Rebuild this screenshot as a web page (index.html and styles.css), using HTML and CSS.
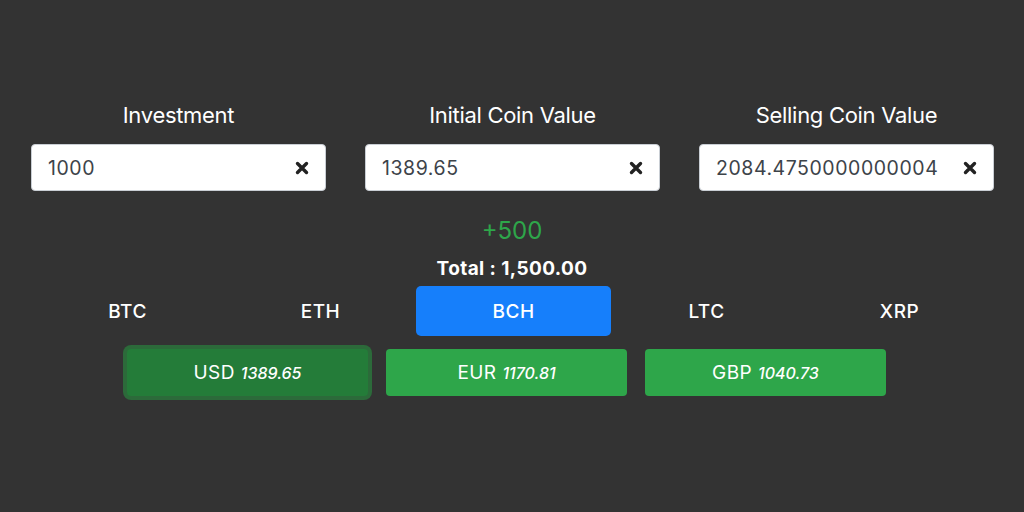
FILE: index.html
```html
<!DOCTYPE html>
<html>
<head>
<meta charset="utf-8">
<link rel="stylesheet" href="styles.css">
</head>
<body>
<main class="app">
  <section class="fields">
    <div class="field">
      <label class="field-label">Investment</label>
      <div class="input-box">
        <span class="input-value">1000</span>
        <svg class="clear" viewBox="0 0 14 14" width="14" height="14"><path d="M2.5 2.5 L11.5 11.5 M11.5 2.5 L2.5 11.5" stroke="#222" stroke-width="3.4" stroke-linecap="round"/></svg>
      </div>
    </div>
    <div class="field">
      <label class="field-label">Initial Coin Value</label>
      <div class="input-box">
        <span class="input-value">1389.65</span>
        <svg class="clear" viewBox="0 0 14 14" width="14" height="14"><path d="M2.5 2.5 L11.5 11.5 M11.5 2.5 L2.5 11.5" stroke="#222" stroke-width="3.4" stroke-linecap="round"/></svg>
      </div>
    </div>
    <div class="field">
      <label class="field-label">Selling Coin Value</label>
      <div class="input-box">
        <span class="input-value">2084.4750000000004</span>
        <svg class="clear" viewBox="0 0 14 14" width="14" height="14"><path d="M2.5 2.5 L11.5 11.5 M11.5 2.5 L2.5 11.5" stroke="#222" stroke-width="3.4" stroke-linecap="round"/></svg>
      </div>
    </div>
  </section>

  <div class="profit">+500</div>
  <div class="total">Total : 1,500.00</div>

  <nav class="coins">
    <div class="coin">BTC</div>
    <div class="coin">ETH</div>
    <div class="coin active">BCH</div>
    <div class="coin">LTC</div>
    <div class="coin">XRP</div>
  </nav>

  <div class="currencies">
    <div class="cur active">USD <em>1389.65</em></div>
    <div class="cur">EUR <em>1170.81</em></div>
    <div class="cur">GBP <em>1040.73</em></div>
  </div>
</main>
</body>
</html>
```

FILE: styles.css
```css
* { box-sizing: border-box; }
html, body {
  margin: 0;
  height: 100%;
}
body {
  background: #333333;
  font-family: Inter, "Open Sans", "Liberation Sans", sans-serif;
  color: #ffffff;
}
.app {
  padding-top: 101px;
}
.fields {
  display: grid;
  grid-template-columns: repeat(3, 295px);
  column-gap: 39px;
  padding-left: 31px;
}
.field {
  display: flex;
  flex-direction: column;
  align-items: stretch;
}
.field-label {
  text-align: center;
  font-size: 22px;
  line-height: 28px;
  letter-spacing: -0.3px;
  margin-bottom: 15px;
}
.input-box {
  height: 47px;
  background: #fff;
  border: 1px solid #c9ced4;
  border-radius: 4px;
  display: flex;
  align-items: center;
  padding: 0 15px 0 16px;
}
.input-value {
  flex: 1;
  font-size: 19.5px;
  color: #3d4349;
  letter-spacing: 0.55px;
}
.clear {
  flex: none;
  margin-right: 1px;
}
.profit {
  margin-top: 25px;
  text-align: center;
  font-size: 24px;
  line-height: 30px;
  color: #2ea64a;
}
.total {
  margin-top: 11px;
  text-align: center;
  font-size: 19px;
  line-height: 24px;
  font-weight: 700;
  letter-spacing: 0.4px;
}
.coins {
  margin-top: 5px;
  display: grid;
  grid-template-columns: repeat(5, 193px);
  padding-left: 31px;
}
.coin {
  height: 50px;
  display: flex;
  align-items: center;
  justify-content: center;
  font-size: 19px;
  font-weight: 500;
  letter-spacing: 0.5px;
  border-radius: 5px;
}
.coin.active {
  background: #167ffb;
  margin: 0 -1px;
}
.currencies {
  margin-top: 13px;
  display: flex;
  gap: 18px;
  padding-left: 127px;
}
.cur {
  width: 241px;
  height: 47px;
  background: #2ea64a;
  border-radius: 4px;
  display: flex;
  align-items: center;
  justify-content: center;
  font-size: 19px;
  letter-spacing: 0.4px;
  gap: 6px;
}
.cur em {
  font-size: 16px;
  font-weight: 500;
  letter-spacing: 0;
}
.cur.active {
  background: #247c39;
  box-shadow: 0 0 0 4px #2c6a3a;
}
```
